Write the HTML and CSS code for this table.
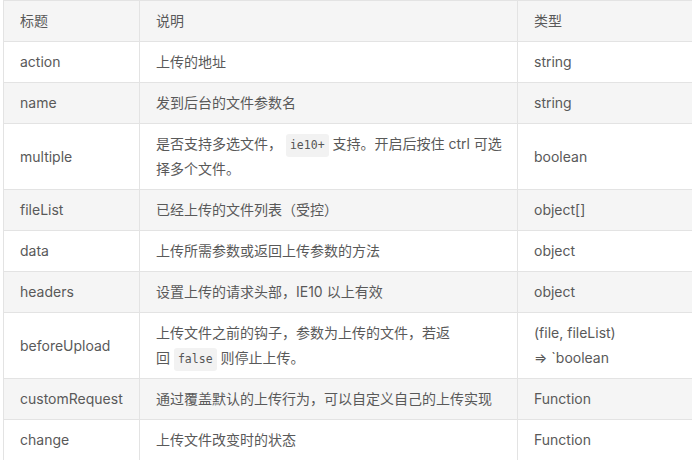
FILE: index.html
```html
<!DOCTYPE html>
<html lang="zh">
<head>
  <meta charset="UTF-8">
  <title>Upload API</title>
  <link rel="stylesheet" href="styles.css">
</head>
<body>
  <table class="api-table">
    <colgroup>
      <col class="col-name">
      <col class="col-desc">
      <col class="col-type">
    </colgroup>
    <thead>
      <tr>
        <th>标题</th>
        <th>说明</th>
        <th>类型</th>
      </tr>
    </thead>
    <tbody>
      <tr>
        <td>action</td>
        <td>上传的地址</td>
        <td>string</td>
      </tr>
      <tr>
        <td>name</td>
        <td>发到后台的文件参数名</td>
        <td>string</td>
      </tr>
      <tr>
        <td>multiple</td>
        <td><span class="line">是否支持多选文件， <code>ie10+</code> 支持。开启后按住 ctrl 可选</span><br>择多个文件。</td>
        <td>boolean</td>
      </tr>
      <tr>
        <td>fileList</td>
        <td>已经上传的文件列表（受控）</td>
        <td>object[]</td>
      </tr>
      <tr>
        <td>data</td>
        <td>上传所需参数或返回上传参数的方法</td>
        <td>object</td>
      </tr>
      <tr>
        <td>headers</td>
        <td>设置上传的请求头部，IE10 以上有效</td>
        <td>object</td>
      </tr>
      <tr>
        <td>beforeUpload</td>
        <td>上传文件之前的钩子，参数为上传的文件，若返<br><span class="line">回 <code>false</code> 则停止上传。</span></td>
        <td>(file, fileList)<br>⇒ `boolean</td>
      </tr>
      <tr>
        <td>customRequest</td>
        <td>通过覆盖默认的上传行为，可以自定义自己的上传实现</td>
        <td>Function</td>
      </tr>
      <tr>
        <td>change</td>
        <td>上传文件改变时的状态</td>
        <td>Function</td>
      </tr>
    </tbody>
  </table>
</body>
</html>
```

FILE: styles.css
```css
body {
  margin: 0;
  overflow: hidden;
  background: #fff;
  font-family: Inter, "Noto Sans CJK SC", sans-serif;
  font-size: 14px;
  color: #595959;
}

.api-table {
  margin-left: 3px;
  width: 720px;
  table-layout: fixed;
  border-collapse: collapse;
  border-spacing: 0;
}

.col-name {
  width: 136px;
}

.col-desc {
  width: 378px;
}

.api-table th,
.api-table td {
  padding: 7px 16px 8px;
  line-height: 25px;
  text-align: left;
  vertical-align: middle;
  border: 1px solid #e3e3e3;
}

.api-table th {
  font-weight: normal;
  background: #f5f5f5;
}

.api-table tbody tr:nth-child(even) {
  background: #f5f5f5;
}

.api-table .line {
  white-space: nowrap;
}

.api-table code {
  font-family: "DejaVu Sans Mono", monospace;
  font-size: 11.5px;
  line-height: 1;
  padding: 4px 4px 5px;
  border-radius: 3px;
  background: #f2f2f2;
  color: #555;
}
```
